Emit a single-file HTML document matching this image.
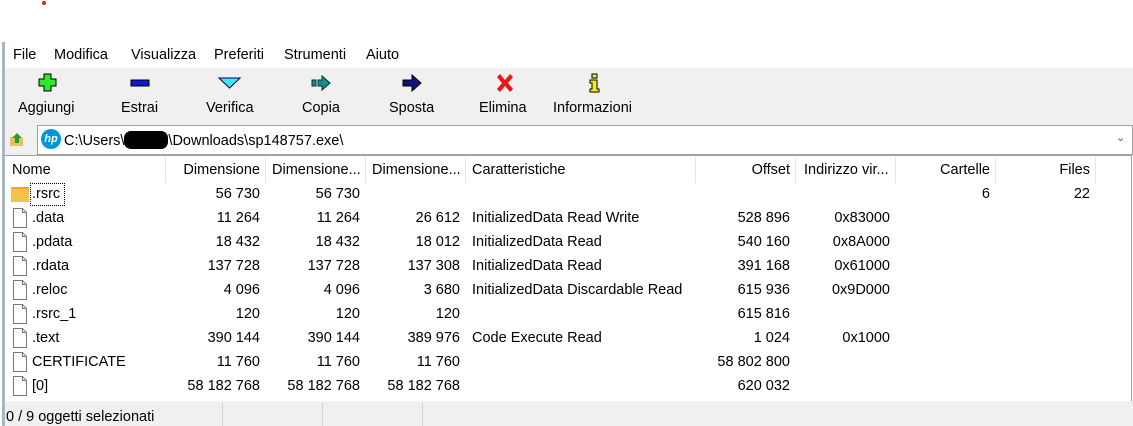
<!DOCTYPE html><html><head><style>
body{margin:0;width:1133px;height:426px;background:#fff;position:relative;overflow:hidden;font-family:"Liberation Sans",sans-serif;font-size:14.5px;color:#000}
.a{position:absolute;white-space:nowrap}
.r{text-align:right}
</style></head><body>
<div class="a" style="left:42px;top:1px;width:4px;height:4px;border-radius:2px;background:#e02020"></div>
<div class="a" style="left:2px;top:42px;width:3px;height:384px;background:#a9b4c2"></div>
<div class="a" style="left:5px;top:42px;width:1128px;height:26px;background:#fff"></div>
<div class="a" style="left:13px;top:47px">File</div>
<div class="a" style="left:54px;top:47px">Modifica</div>
<div class="a" style="left:131px;top:47px">Visualizza</div>
<div class="a" style="left:214px;top:47px">Preferiti</div>
<div class="a" style="left:284px;top:47px">Strumenti</div>
<div class="a" style="left:366px;top:47px">Aiuto</div>
<div class="a" style="left:5px;top:68px;width:1128px;height:87px;background:#f0f0f0"></div>
<svg class="a" style="left:0;top:68px" width="660" height="30">
<path d="M44 6h7v5h5v7h-5v5h-7v-5h-5v-7h5z" fill="#2ee82e" stroke="#000"/>
<rect x="131" y="12" width="18" height="6" fill="#1515d0" stroke="#000"/>
<path d="M219 10h21l-10.5 10z" fill="#3de8f0" stroke="#006"/>
<path d="M312 12h4v6h-4zM318 12h4v-4l8 7-8 7v-4h-4z" fill="#1a8a8a" stroke="#033"/>
<path d="M403 12h9v-5l9 8-9 8v-5h-9z" fill="#101080" stroke="#000"/>
<path d="M497 9l3-3 5 6 5-6 3 3-5 6 5 6-3 3-5-6-5 6-3-3 5-6z" fill="#e81818"/>
<path d="M592 6h5v4h-5zM590 12h7v9h2v3h-9v-3h2v-6h-2z" fill="#f0f020" stroke="#000"/>
</svg>
<div class="a" style="left:18px;top:100px">Aggiungi</div>
<div class="a" style="left:121px;top:100px">Estrai</div>
<div class="a" style="left:206px;top:100px">Verifica</div>
<div class="a" style="left:302px;top:100px">Copia</div>
<div class="a" style="left:389px;top:100px">Sposta</div>
<div class="a" style="left:479px;top:100px">Elimina</div>
<div class="a" style="left:553px;top:100px">Informazioni</div>
<svg class="a" style="left:9px;top:131px" width="16" height="16"><path d="M1 6h5l1 1h7v8H1z" fill="#e8c060"/><path d="M8 2l5 5h-3v5H6V7H3z" fill="#28a028"/></svg>
<div class="a" style="left:37px;top:125px;width:1094px;height:28px;background:#fff;border:1px solid #a0a0a0"></div>
<div class="a" style="left:41px;top:129px;width:20px;height:20px;border-radius:10px;background:#0096d6;color:#fff;font-size:11px;font-style:italic;font-weight:bold;text-align:center;line-height:20px">hp</div>
<div class="a" style="left:64px;top:131px">C:\Users\<span style="display:inline-block;width:44px;height:18px;background:#000;border-radius:7px;vertical-align:-4px"></span>\Downloads\sp148757.exe\</div>
<div class="a" style="left:1116px;top:131px;font-size:11px;color:#555">&#8964;</div>
<div class="a" style="left:5px;top:155px;width:1126px;height:245px;border-right:1px solid #a0a0a0;border-bottom:1px solid #a0a0a0;border-top:1px solid #a0a0a0;background:#fff"></div>
<div class="a" style="left:165px;top:157px;width:1px;height:26px;background:#e5e5e5"></div>
<div class="a" style="left:265px;top:157px;width:1px;height:26px;background:#e5e5e5"></div>
<div class="a" style="left:365px;top:157px;width:1px;height:26px;background:#e5e5e5"></div>
<div class="a" style="left:465px;top:157px;width:1px;height:26px;background:#e5e5e5"></div>
<div class="a" style="left:695px;top:157px;width:1px;height:26px;background:#e5e5e5"></div>
<div class="a" style="left:795px;top:157px;width:1px;height:26px;background:#e5e5e5"></div>
<div class="a" style="left:895px;top:157px;width:1px;height:26px;background:#e5e5e5"></div>
<div class="a" style="left:995px;top:157px;width:1px;height:26px;background:#e5e5e5"></div>
<div class="a" style="left:1095px;top:157px;width:1px;height:26px;background:#e5e5e5"></div>
<div class="a" style="left:12px;top:162px">Nome</div>
<div class="a r" style="left:165px;width:95px;top:162px">Dimensione</div>
<div class="a" style="left:272px;top:162px">Dimensione...</div>
<div class="a" style="left:372px;top:162px">Dimensione...</div>
<div class="a" style="left:472px;top:162px">Caratteristiche</div>
<div class="a r" style="left:695px;width:95px;top:162px">Offset</div>
<div class="a" style="left:804px;top:162px">Indirizzo vir...</div>
<div class="a r" style="left:895px;width:95px;top:162px">Cartelle</div>
<div class="a r" style="left:995px;width:95px;top:162px">Files</div>
<div id="rows"></div>
<div class="a" style="left:11px;top:187px;width:18px;height:13px;background:#f3c24a;border-top:2px solid #e8a820"></div>
<div class="a" style="left:30px;top:183px;width:33px;height:21px;border:1px dotted #000"></div>
<script>
var d=[[".rsrc","56 730","56 730","","","","","6","22"],
[".data","11 264","11 264","26 612","InitializedData Read Write","528 896","0x83000"],
[".pdata","18 432","18 432","18 012","InitializedData Read","540 160","0x8A000"],
[".rdata","137 728","137 728","137 308","InitializedData Read","391 168","0x61000"],
[".reloc","4 096","4 096","3 680","InitializedData Discardable Read","615 936","0x9D000"],
[".rsrc_1","120","120","120","","615 816",""],
[".text","390 144","390 144","389 976","Code Execute Read","1 024","0x1000"],
["CERTIFICATE","11 760","11 760","11 760","","58 802 800",""],
["[0]","58 182 768","58 182 768","58 182 768","","620 032",""]];
var h="";d.forEach(function(r,i){var t=186+i*24;
if(i>0)h+='<svg class="a" style="left:12px;top:'+(t-2)+'px" width="16" height="20"><path d="M1.5 .5h9l4 4v15h-13z" fill="#fff" stroke="#777"/><path d="M10.5 .5v4h4" fill="none" stroke="#777"/></svg>';
h+='<div class="a" style="left:32px;top:'+t+'px">'+r[0]+'</div>';
var R=[260,360,460];for(var k=0;k<3;k++)h+='<div class="a r" style="left:'+(R[k]-95)+'px;width:95px;top:'+t+'px">'+r[k+1]+'</div>';
h+='<div class="a" style="left:472px;top:'+t+'px">'+r[4]+'</div>';
h+='<div class="a r" style="left:695px;width:95px;top:'+t+'px">'+r[5]+'</div>';
h+='<div class="a r" style="left:795px;width:95px;top:'+t+'px">'+r[6]+'</div>';
if(r[7])h+='<div class="a r" style="left:895px;width:95px;top:'+t+'px">'+r[7]+'</div><div class="a r" style="left:995px;width:95px;top:'+t+'px">'+r[8]+'</div>';
});document.getElementById("rows").innerHTML=h;
</script>
<div class="a" style="left:5px;top:401px;width:1128px;height:25px;background:#f0f0f0"></div>
<div class="a" style="left:222px;top:403px;width:1px;height:23px;background:#d0d0d0"></div>
<div class="a" style="left:322px;top:403px;width:1px;height:23px;background:#d0d0d0"></div>
<div class="a" style="left:422px;top:403px;width:1px;height:23px;background:#d0d0d0"></div>
<div class="a" style="left:6px;top:409px">0 / 9 oggetti selezionati</div>
</body></html>
